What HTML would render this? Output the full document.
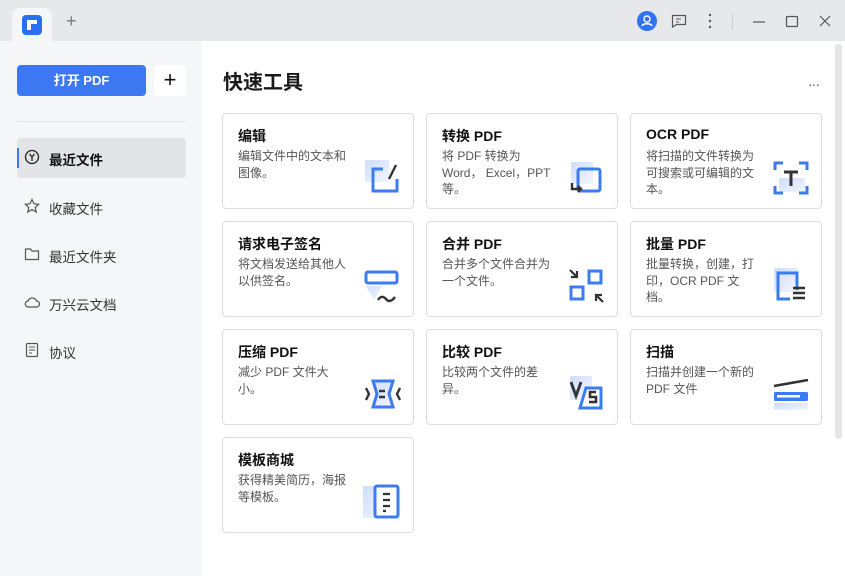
<!DOCTYPE html>
<html><head><meta charset="utf-8"><style>
*{margin:0;padding:0;box-sizing:border-box}
body{width:845px;height:576px;overflow:hidden;background:#fff;font-family:"Liberation Sans","Noto Sans CJK SC",sans-serif;position:relative;color:#222}
.top{position:absolute;left:0;top:0;width:845px;height:41px;background:#e7e8eb}
.tab{position:absolute;left:12px;top:8px;width:40px;height:34px;background:#f5f6f8;border-radius:8px 8px 0 0}
.side{position:absolute;left:0;top:41px;width:202px;height:535px;background:#f5f6f8}
.open{position:absolute;left:17px;top:65px;width:129px;height:31px;background:#3b78f2;border-radius:4px;color:#fff;font-size:13px;font-weight:bold;text-align:center;line-height:31px}
.plus{position:absolute;left:154px;top:65px;width:32px;height:31px;background:#fff;border-radius:4px;font-size:22px;text-align:center;line-height:30px;color:#111}
.div{position:absolute;left:17px;top:121px;width:169px;height:1px;background:#e0e1e4}
.act{position:absolute;left:17px;top:138px;width:169px;height:40px;background:#e3e4e6;border-radius:3px}
.bar{position:absolute;left:17px;top:148px;width:2px;height:20px;background:#3b78f2}
.it{position:absolute;left:49px;font-size:13.5px;color:#333}
.ic{position:absolute;left:24px}
h1{position:absolute;left:223px;top:66px;font-size:20px;font-weight:bold;color:#1a1a1a}
.card{position:absolute;width:192px;height:96px;border:1px solid #dcdde0;border-radius:4px;background:#fff}
.card b{position:absolute;left:15px;top:12px;font-size:14px;color:#111}
.card p{position:absolute;left:15px;top:34px;width:110px;font-size:12px;line-height:16.5px;color:#555}
.card svg{position:absolute;left:140px;top:44px}
.sb{position:absolute;left:835px;top:44px;width:7px;height:395px;background:#e6e6e6;border-radius:3px}
</style></head><body>
<div class="top"></div>
<div class="tab"><svg style="position:absolute;left:10px;top:7px" width="20" height="20"><rect width="20" height="20" rx="4" fill="#2a6ff0"/><path d="M5 5h10v4h-6v6h-4z" fill="#fff"/></svg></div>
<div style="position:absolute;left:66px;top:11px;font-size:18px;color:#777">+</div>
<svg style="position:absolute;left:637px;top:11px" width="20" height="20"><circle cx="10" cy="10" r="10" fill="#2f74ee"/><circle cx="10" cy="8" r="3" fill="none" stroke="#fff" stroke-width="1.4"/><path d="M5 15c1-3 9-3 10 0" fill="none" stroke="#fff" stroke-width="1.4"/></svg>
<svg style="position:absolute;left:671px;top:14px" width="16" height="14"><path d="M1.5 1.5h13v9h-9l-4 2.5z" fill="none" stroke="#555" stroke-width="1.2"/><path d="M5 5h5M5 8h3" stroke="#555"/></svg>
<svg style="position:absolute;left:707px;top:13px" width="6" height="16"><circle cx="3" cy="2" r="1.2" fill="#555"/><circle cx="3" cy="8" r="1.2" fill="#555"/><circle cx="3" cy="14" r="1.2" fill="#555"/></svg>
<div style="position:absolute;left:732px;top:14px;width:1px;height:15px;background:#ccc"></div>
<svg style="position:absolute;left:752px;top:12px" width="82" height="18"><path d="M1 10h12" stroke="#555" stroke-width="1.2"/><rect x="34.5" y="4.5" width="11" height="10" rx="1" fill="none" stroke="#555" stroke-width="1.2"/><path d="M68 4l10 10M78 4l-10 10" stroke="#555" stroke-width="1.2"/></svg>
<div class="side"></div>
<div class="open">打开 PDF</div>
<div class="plus">+</div>
<div class="div"></div>
<div class="act"></div><div class="bar"></div>
<svg class="ic" style="top:149px" width="16" height="16"><circle cx="8" cy="8" r="6.5" fill="none" stroke="#222" stroke-width="1.3"/><path d="M5.5 5l2.5 3 2.5-3M8 8v4" fill="none" stroke="#222" stroke-width="1.3"/></svg>
<div class="it" style="top:149px;font-weight:bold;color:#111">最近文件</div>
<svg class="ic" style="top:198px" width="16" height="16"><path d="M8 1.5l2 4.3 4.6.5-3.4 3.1 1 4.6L8 11.6 3.8 14l1-4.6L1.4 6.3 6 5.8z" fill="none" stroke="#555" stroke-width="1.2"/></svg>
<div class="it" style="top:198px">收藏文件</div>
<svg class="ic" style="top:246px" width="16" height="16"><path d="M1.5 3h5l1.5 2h6.5v8.5h-13z" fill="none" stroke="#555" stroke-width="1.2"/></svg>
<div class="it" style="top:246px">最近文件夹</div>
<svg class="ic" style="top:294px" width="16" height="16"><path d="M4.5 13a3 3 0 0 1-.5-6 4.5 4.5 0 0 1 8.5 0 3 3 0 0 1 0 6z" fill="none" stroke="#555" stroke-width="1.2"/></svg>
<div class="it" style="top:294px">万兴云文档</div>
<svg class="ic" style="top:342px" width="16" height="16"><rect x="2.5" y="1.5" width="11" height="13" rx="1" fill="none" stroke="#555" stroke-width="1.2"/><path d="M5 5h6M5 8h6M5 11h3" stroke="#555"/></svg>
<div class="it" style="top:342px">协议</div>

<h1>快速工具</h1>
<div style="position:absolute;left:808px;top:76px;font-size:14px;color:#555;letter-spacing:-1px">···</div>
<div class="sb"></div>
<svg width="0" height="0" style="position:absolute"><defs><linearGradient id="g" x1="0" y1="0" x2="1" y2="1"><stop offset="0" stop-color="#cfdcfb"/><stop offset="1" stop-color="#f3f6fe"/></linearGradient></defs></svg>

<div class="card" style="left:222px;top:113px"><b>编辑</b><p>编辑文件中的文本和图像。</p>
<svg width="40" height="40"><rect x="2" y="2" width="24" height="22" fill="url(#g)"/><path d="M20 11h-10v22h24v-12" fill="none" stroke="#3b7cf0" stroke-width="3"/><path d="M26 21l7-14" stroke="#333" stroke-width="2.4"/></svg></div>
<div class="card" style="left:426px;top:113px"><b>转换 PDF</b><p>将 PDF 转换为Word， Excel，PPT 等。</p>
<svg width="40" height="40"><rect x="4" y="4" width="22" height="22" fill="url(#g)"/><rect x="11" y="11" width="22" height="22" rx="2" fill="none" stroke="#3b7cf0" stroke-width="3"/><path d="M5 25v6h9M11 28l3 3-3 3" fill="none" stroke="#333" stroke-width="2.4"/></svg></div>
<div class="card" style="left:630px;top:113px"><b>OCR PDF</b><p>将扫描的文件转换为可搜索或可编辑的文本。</p>
<svg width="40" height="40"><rect x="8" y="20" width="26" height="14" fill="url(#g)"/><path d="M4 12V5h8M28 5h8v7M4 28v7h8M28 35h8v-7" fill="none" stroke="#3b7cf0" stroke-width="3"/><path d="M13 14h14M20 14v14" stroke="#333" stroke-width="3"/></svg></div>

<div class="card" style="left:222px;top:221px"><b>请求电子签名</b><p>将文档发送给其他人以供签名。</p>
<svg width="40" height="40"><rect x="3" y="6" width="31" height="11" rx="2" fill="#fff" stroke="#3b7cf0" stroke-width="3"/><path d="M3 20h16l-8 14z" fill="url(#g)"/><path d="M15 34c4-6 7-2 9 0s5 1 8-3" fill="none" stroke="#333" stroke-width="2.4"/></svg></div>
<div class="card" style="left:426px;top:221px"><b>合并 PDF</b><p>合并多个文件合并为一个文件。</p>
<svg width="40" height="40"><rect x="22" y="5" width="12" height="12" fill="#fff" stroke="#3b7cf0" stroke-width="3"/><rect x="4" y="21" width="12" height="12" fill="#fff" stroke="#3b7cf0" stroke-width="3"/><path d="M3 4l7 7M10 5v6H4M36 36l-7-7M29 35v-6h6" fill="none" stroke="#333" stroke-width="2.2"/></svg></div>
<div class="card" style="left:630px;top:221px"><b>批量 PDF</b><p>批量转换，创建，打印，OCR PDF 文档。</p>
<svg width="40" height="40"><rect x="3" y="2" width="24" height="24" rx="2" fill="url(#g)"/><path d="M26 24V7H7v26h12" fill="none" stroke="#3b7cf0" stroke-width="3"/><path d="M22 22h12M22 27h12M22 32h12" stroke="#333" stroke-width="2.4"/></svg></div>

<div class="card" style="left:222px;top:329px"><b>压缩 PDF</b><p style="width:100px">减少 PDF 文件大小。</p>
<svg width="40" height="40"><path d="M10 7h20l-4 13 4 13H10l4-13z" fill="url(#g)" stroke="#3b7cf0" stroke-width="3"/><path d="M3 14l3 6-3 6M37 14l-3 6 3 6" fill="none" stroke="#333" stroke-width="2.4"/><path d="M16 17h6M16 23h6" stroke="#333" stroke-width="2.4"/></svg></div>
<div class="card" style="left:426px;top:329px"><b>比较 PDF</b><p>比较两个文件的差异。</p>
<svg width="40" height="40"><rect x="3" y="2" width="22" height="24" fill="url(#g)"/><path d="M19 14h15v20H13z" fill="#fff" stroke="#3b7cf0" stroke-width="3"/><path d="M4 8l5 14 5-14" fill="none" stroke="#333" stroke-width="2.8"/><path d="M29 18h-6v5h6v5h-7" fill="none" stroke="#333" stroke-width="2.6"/></svg></div>
<div class="card" style="left:630px;top:329px"><b>扫描</b><p>扫描并创建一个新的PDF 文件</p>
<svg width="40" height="40"><path d="M3 12l34-6" stroke="#333" stroke-width="2.6"/><rect x="3" y="18" width="34" height="9" rx="1.5" fill="#3b7cf0"/><rect x="6" y="21" width="23" height="2.5" fill="#fff"/><rect x="3" y="29" width="34" height="7" fill="url(#g)"/></svg></div>

<div class="card" style="left:222px;top:437px"><b>模板商城</b><p>获得精美简历，海报等模板。</p>
<svg width="40" height="40"><rect x="0" y="4" width="20" height="32" fill="url(#g)"/><rect x="12" y="4" width="23" height="31" rx="2" fill="#fff" stroke="#3b7cf0" stroke-width="3"/><path d="M20 12h7M20 18h7M20 24h7M20 29h3" stroke="#333" stroke-width="2.2"/></svg></div>
</body></html>
